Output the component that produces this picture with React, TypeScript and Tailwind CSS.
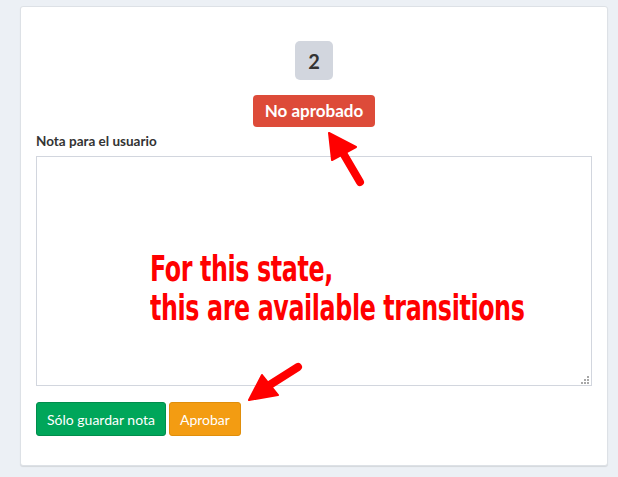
import React from "react";

function Annotations() {
  return (
    <>
      <svg
        className="pointer-events-none absolute left-0 top-0"
        width={618}
        height={477}
        viewBox="0 0 618 477"
      >
        {/* arrow pointing at the status badge */}
        <line x1={343} y1={153} x2={360} y2={182} stroke="#ff0000" strokeWidth={8} strokeLinecap="round" />
        <polygon points="329,133 356,147 332,160" fill="#ff0000" stroke="#ff0000" strokeWidth={2} strokeLinejoin="round" />
        {/* arrow pointing at the action buttons */}
        <line x1={268} y1={386} x2={298} y2={367} stroke="#ff0000" strokeWidth={8} strokeLinecap="round" />
        <polygon points="249,400 262,375 278,395" fill="#ff0000" stroke="#ff0000" strokeWidth={2} strokeLinejoin="round" />
      </svg>
      <div className="pointer-events-none absolute left-[150px] top-[250px] origin-left scale-x-[0.755] font-['DejaVu_Sans_Condensed','Liberation_Sans_Narrow',sans-serif] text-[35px] font-bold leading-[39px] tracking-[-0.5px] text-[#ff0000] whitespace-nowrap">
        For this state,
        <br />
        this are available transitions
      </div>
    </>
  );
}

function ResizeGrip() {
  const dots = [
    [6, 0],
    [3, 3],
    [6, 3],
    [0, 6],
    [3, 6],
    [6, 6],
  ];
  return (
    <div className="pointer-events-none absolute bottom-[2px] right-[3px] h-[8px] w-[8px]">
      {dots.map(([x, y], i) => (
        <span
          key={i}
          className="absolute h-[2px] w-[2px] bg-[#a8a8a8]"
          style={{ left: x, top: y }}
        />
      ))}
    </div>
  );
}

export default function App() {
  return (
    <div className="relative min-h-[477px] bg-[#ecf0f5] pl-[20px] pr-[10px] pt-[6px] font-['Lato',sans-serif]">
      <div className="flex flex-col items-center rounded-[3px] border border-[#dde1e6] bg-white px-[15px] pt-[34px] pb-[29px] shadow-[0_1px_1px_rgba(0,0,0,0.1)]">
        <div className="flex h-[39px] w-[38px] items-center justify-center rounded-[5px] bg-[#d2d6de] text-[20px] font-bold text-[#333]">
          2
        </div>
        <span className="mt-[15px] flex h-[32px] items-center rounded-[4px] bg-[#dd4b39] px-[12px] text-[17px] font-bold text-white">
          No aprobado
        </span>
        <label className="mt-[5px] mb-[6px] self-stretch text-[13.5px] font-bold leading-[18px] text-[#333]">
          Nota para el usuario
        </label>
        <div className="relative w-full">
          <textarea className="block h-[230px] w-full resize-none border border-[#d2d6de] px-3 py-1.5 text-[14px] outline-none" />
          <ResizeGrip />
        </div>
        <div className="mt-[16px] flex gap-[3px] self-stretch">
          <button className="h-[34px] rounded-[3px] border border-[#008d4c] bg-[#00a65a] px-[10px] text-[14px] text-white">
            Sólo guardar nota
          </button>
          <button className="h-[34px] rounded-[3px] border border-[#e08e0b] bg-[#f39c12] px-[10px] text-[14px] text-white">
            Aprobar
          </button>
        </div>
      </div>
      <Annotations />
    </div>
  );
}
